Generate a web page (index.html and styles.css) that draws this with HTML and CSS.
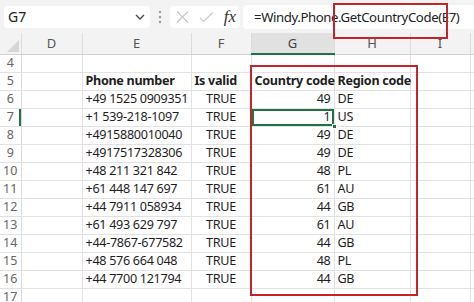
FILE: index.html
```html
<!DOCTYPE html>
<html lang="en">
<head>
    <meta charset="UTF-8">
    <title>Windy.Phone</title>
    <link rel="stylesheet" href="styles.css">
</head>
<body>
    <div class="screen">
        <div class="toolbar">
            <div class="namebox">
                <span>G7</span>
                <svg class="chevron" width="10" height="6" viewBox="0 0 10 6"><path d="M1 1l4 4 4-4" fill="none" stroke="#444" stroke-width="1.3"/></svg>
            </div>
            <svg class="dots" width="4" height="14" viewBox="0 0 4 14"><circle cx="2" cy="2" r="1.2" fill="#999"/><circle cx="2" cy="7" r="1.2" fill="#999"/><circle cx="2" cy="12" r="1.2" fill="#999"/></svg>
            <div class="fx-buttons">
                <svg width="14" height="14" viewBox="0 0 14 14"><path d="M1 1l12 12M13 1L1 13" stroke="#c8c8c8" stroke-width="1.3"/></svg>
                <svg width="16" height="14" viewBox="0 0 16 14"><path d="M1 8l4 4L15 2" fill="none" stroke="#c8c8c8" stroke-width="1.3"/></svg>
                <span class="fx">fx</span>
            </div>
            <div class="formula">=Windy.Phone.GetCountryCode(E7)</div>
        </div>

        <table class="sheet">
            <colgroup>
                <col style="width:21px"><col style="width:61px"><col style="width:109px"><col style="width:60px">
                <col style="width:83px"><col style="width:76px"><col style="width:60px"><col style="width:20px">
            </colgroup>
            <thead>
                <tr>
                    <th class="corner"><span class="tri"></span></th>
                    <th>D</th><th>E</th><th>F</th><th class="active">G</th><th>H</th><th>I</th><th></th>
                </tr>
            </thead>
            <tbody>
                <tr><td class="rh">4</td><td></td><td></td><td></td><td></td><td></td><td></td><td></td></tr>
                <tr><td class="rh">5</td><td></td><td class="b">Phone number</td><td class="b">Is valid</td><td class="b">Country code</td><td class="b">Region code</td><td></td><td></td></tr>
                <tr><td class="rh">6</td><td></td><td>+49 1525 0909351</td><td class="c">TRUE</td><td class="r">49</td><td>DE</td><td></td><td></td></tr>
                <tr><td class="rh sel">7</td><td></td><td>+1 539-218-1097</td><td class="c">TRUE</td><td class="r cur">1<span class="handle"></span></td><td>US</td><td></td><td></td></tr>
                <tr><td class="rh">8</td><td></td><td>+4915880010040</td><td class="c">TRUE</td><td class="r">49</td><td>DE</td><td></td><td></td></tr>
                <tr><td class="rh">9</td><td></td><td>+4917517328306</td><td class="c">TRUE</td><td class="r">49</td><td>DE</td><td></td><td></td></tr>
                <tr><td class="rh">10</td><td></td><td>+48 211 321 842</td><td class="c">TRUE</td><td class="r">48</td><td>PL</td><td></td><td></td></tr>
                <tr><td class="rh">11</td><td></td><td>+61 448 147 697</td><td class="c">TRUE</td><td class="r">61</td><td>AU</td><td></td><td></td></tr>
                <tr><td class="rh">12</td><td></td><td>+44 7911 058934</td><td class="c">TRUE</td><td class="r">44</td><td>GB</td><td></td><td></td></tr>
                <tr><td class="rh">13</td><td></td><td>+61 493 629 797</td><td class="c">TRUE</td><td class="r">61</td><td>AU</td><td></td><td></td></tr>
                <tr><td class="rh">14</td><td></td><td>+44-7867-677582</td><td class="c">TRUE</td><td class="r">44</td><td>GB</td><td></td><td></td></tr>
                <tr><td class="rh">15</td><td></td><td>+48 576 664 048</td><td class="c">TRUE</td><td class="r">48</td><td>PL</td><td></td><td></td></tr>
                <tr><td class="rh">16</td><td></td><td>+44 7700 121794</td><td class="c">TRUE</td><td class="r">44</td><td>GB</td><td></td><td></td></tr>
                <tr><td class="rh">17</td><td></td><td></td><td></td><td></td><td></td><td></td><td></td></tr>
            </tbody>
        </table>

        <!-- rahmen (markierungen) -->
        <div class="mark mark-formula"></div>
        <div class="mark mark-cols"></div>
    </div>
</body>
</html>
```

FILE: styles.css
```css
* {
    margin: 0;
    padding: 0;
    box-sizing: border-box;
}

body {
    background: #ffffff;
    font-family: "Noto Sans", "Open Sans", sans-serif;
    color: #1e1e1e;
}

.screen {
    position: relative;
    width: 474px;
    height: 302px;
    overflow: hidden;
}

/* barra superior */
.toolbar {
    display: flex;
    align-items: center;
    height: 33px;
    background: #f3f3f3;
    padding: 0 0 0 4px;
}

.namebox {
    display: flex;
    flex-shrink: 0;
    align-items: center;
    justify-content: space-between;
    width: 146px;
    height: 22px;
    background: #fff;
    border-radius: 4px;
    padding: 0 5px 0 4px;
    font-size: 14px;
    color: #222;
}

.dots {
    flex-shrink: 0;
    margin: 0 8px 0 8px;
}

.fx-buttons {
    display: flex;
    flex-shrink: 0;
    align-items: center;
    gap: 10px;
    width: 70px;
    height: 22px;
    background: #fff;
    border-radius: 4px;
    padding: 0 4px 0 6px;
}

.fx {
    font-family: "Liberation Serif", serif;
    font-style: italic;
    font-size: 17px;
    color: #333;
    margin-left: auto;
}

.formula {
    flex: 1;
    min-width: 0;
    height: 24px;
    margin-left: 3px;
    background: #fff;
    border-radius: 4px 0 0 4px;
    padding-left: 11px;
    font-size: 13.2px;
    letter-spacing: -0.4px;
    line-height: 24px;
    color: #222;
    white-space: nowrap;
}

/* planilha */
.sheet {
    border-collapse: collapse;
    table-layout: fixed;
    width: 490px;
    font-size: 12.6px;
    letter-spacing: -0.3px;
}

.sheet th {
    height: 21px;
    background: #f3f3f3;
    font-weight: normal;
    font-size: 13px;
    letter-spacing: 0;
    color: #555;
    border-right: 1px solid #dcdcdc;
    border-bottom: 1px solid #d0d0d0;
}

.sheet th.active {
    background: #e1e1e1;
    border-bottom: 2px solid #217346;
    color: #444;
}

.sheet th.corner {
    position: relative;
}

.tri {
    position: absolute;
    right: 2px;
    bottom: 2px;
    width: 0;
    height: 0;
    border-left: 12px solid transparent;
    border-bottom: 12px solid #d6d6d6;
}

.sheet td {
    height: 18px;
    border: 1px solid #e2e2e2;
    padding: 0 3px;
    white-space: nowrap;
    overflow: visible;
    line-height: 16px;
}

.sheet td.rh {
    text-align: center;
    color: #666;
    font-size: 12.5px;
    letter-spacing: 0;
    padding: 0;
    border-left: none;
    border-right: 1px solid #dcdcdc;
}

.sheet td.rh.sel {
    box-shadow: inset -2px 0 0 #217346;
}

.b {
    font-weight: bold;
}

.c {
    text-align: center;
}

.sheet td.r {
    text-align: right;
}

.sheet td.cur {
    position: relative;
    box-shadow: inset 0 0 0 2px #217346;
}

.handle {
    position: absolute;
    right: -3px;
    bottom: -3px;
    width: 5px;
    height: 5px;
    background: #217346;
    border: 1px solid #fff;
}

/* marcações vermelhas */
.mark {
    position: absolute;
    border: 2px solid #c7232d;
}

.mark-formula {
    left: 333px;
    top: 3px;
    width: 115px;
    height: 36px;
}

.mark-cols {
    left: 250px;
    top: 65px;
    width: 168px;
    height: 231px;
}
```
